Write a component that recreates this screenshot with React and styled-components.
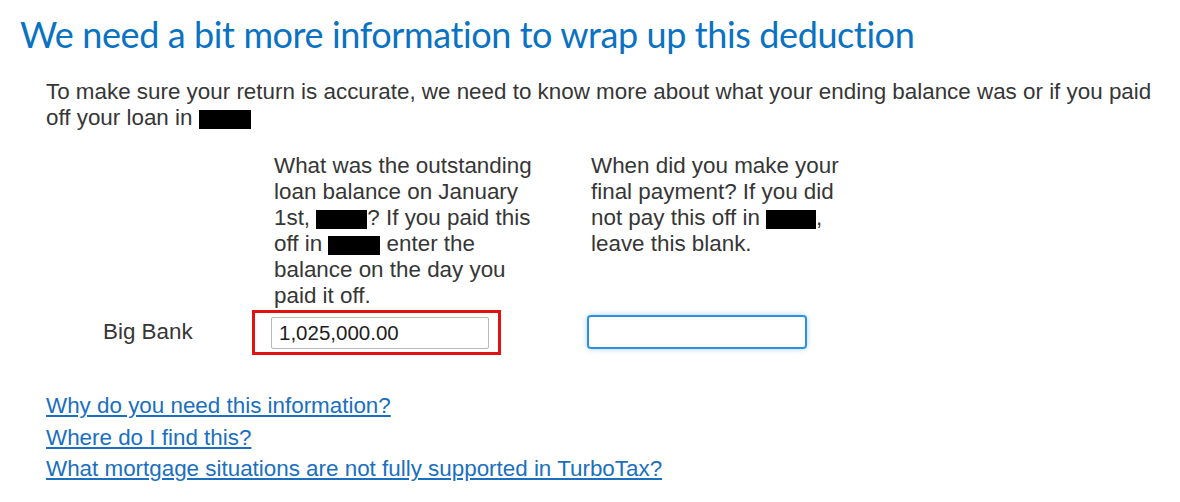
import React from 'react'
import styled, { createGlobalStyle } from 'styled-components'

const GlobalStyle = createGlobalStyle`
  body {
    margin: 0;
    background: #fff;
    font-family: "Liberation Sans", Arial, sans-serif;
    color: #363636;
  }
`

const Page = styled.div`
  padding: 14px 0 0 20px;
`

const Title = styled.h1`
  margin: 0;
  font-family: Lato, "Open Sans", sans-serif;
  font-weight: 400;
  font-size: 36px;
  letter-spacing: -0.4px;
  line-height: 40px;
  color: #0a72c2;
`

const Body = styled.div`
  padding-left: 26px;
  font-size: 22.4px;
  line-height: 26px;
`

const Intro = styled.p`
  margin: 25px 0 0;
  width: 1120px;
`

const Redacted = styled.span`
  display: inline-block;
  width: ${p => p.w || 51}px;
  height: 19px;
  background: #000;
  vertical-align: -4px;
`

const QuestionGrid = styled.div`
  display: grid;
  grid-template-columns: 206px 336px 1fr;
  align-items: center;
  margin-top: 22px;
`

const Question = styled.div`
  align-self: start;
  padding-left: ${p => p.pad}px;
  width: ${p => p.w}px;
`

const Label = styled.div`
  padding-left: 57px;
`

const Highlight = styled.div`
  width: 227px;
  height: 35px;
  border: 3px solid #e31212;
  padding: 4px 0 0 16px;
  box-sizing: content-box;
  margin-top: 1px;
`

const Input = styled.input`
  box-sizing: border-box;
  width: 218px;
  height: 32px;
  padding: 0 7px;
  font-family: "Liberation Sans", Arial, sans-serif;
  font-size: 20.5px;
  color: #1e1e1e;
  background: #fff;
  border: 1px solid #b9b9b9;
  border-radius: 2px;
  outline: none;
  caret-color: #000;

  &:focus {
    padding: 0 5px;
    border-color: #2e90dc;
    border-radius: 3px;
    box-shadow: 0 0 0 1px #2e90dc, 0 0 6px rgba(46, 144, 220, 0.55);
  }
`

const Links = styled.div`
  display: flex;
  flex-direction: column;
  margin-top: 35px;
`

const HelpLink = styled.a`
  color: #1a6fbf;
  text-decoration: underline;
  text-underline-offset: 2px;
  line-height: 31.5px;
  width: max-content;
  cursor: pointer;
`

export default function App() {
  return (
    <>
      <GlobalStyle />
      <Page>
        <Title>We need a bit more information to wrap up this deduction</Title>
        <Body>
          <Intro>
            To make sure your return is accurate, we need to know more about what your ending balance was or if you paid
            off your loan in <Redacted w={52} />
          </Intro>

          <QuestionGrid>
            <div />
            <Question pad={22} w={265}>
              What was the outstanding loan balance on January 1st, <Redacted />? If you paid this off in{' '}
              <Redacted w={52} /> enter the balance on the day you paid it off.
            </Question>
            <Question pad={3} w={255}>
              When did you make your final payment? If you did not pay this off in <Redacted w={50} />,
              leave this blank.
            </Question>

            <Label>Big Bank</Label>
            <div>
              <Highlight>
                <Input defaultValue="1,025,000.00" />
              </Highlight>
            </div>
            <div>
              <Input autoFocus />
            </div>
          </QuestionGrid>

          <Links>
            <HelpLink>Why do you need this information?</HelpLink>
            <HelpLink>Where do I find this?</HelpLink>
            <HelpLink>What mortgage situations are not fully supported in TurboTax?</HelpLink>
          </Links>
        </Body>
      </Page>
    </>
  )
}
